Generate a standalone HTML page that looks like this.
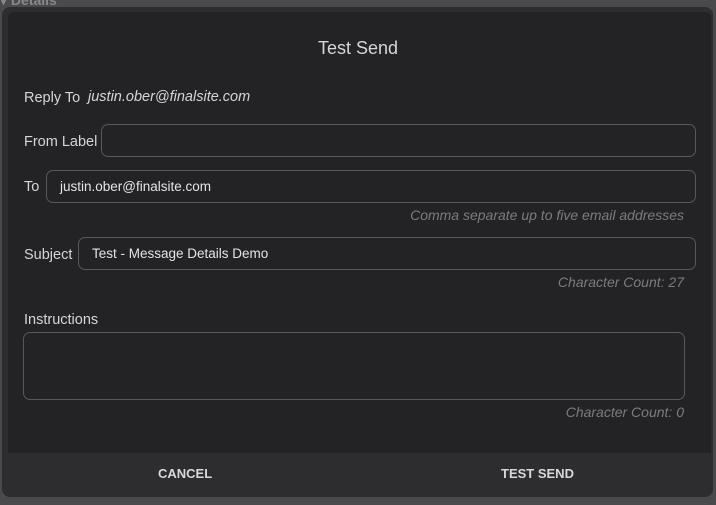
<!DOCTYPE html><html><head><style>
body{margin:0;width:716px;height:505px;background:#4a4a4d;position:relative;overflow:hidden;font-family:"Liberation Sans",sans-serif;}
.dlg{position:absolute;left:2px;top:7px;width:711px;height:490px;background:#2d2d30;border-radius:8px;}
.in{position:absolute;left:8px;top:12px;width:703px;height:441px;background:#232326;border-radius:6px 6px 0 0;}
.t{position:absolute;color:#d6d6d8;font-size:14.5px;}
.box{position:absolute;border:1px solid #58585c;border-radius:7px;box-sizing:border-box;color:#e4e4e6;font-size:13.5px;padding-left:13px;display:flex;align-items:center;}
.h{position:absolute;color:#7c7c80;font-size:14px;font-style:italic;text-align:right;right:32px;}
.btn{position:absolute;color:#d8d8da;font-size:13px;font-weight:bold;top:466px;}
</style></head><body>
<div style="position:absolute;left:0;top:-8px;color:#888;font-size:14px;font-weight:bold">▾ Details</div>
<div class="dlg"></div><div class="in"></div>
<div class="t" style="left:0;width:716px;text-align:center;top:38px;font-size:18px;">Test Send</div>
<div class="t" style="left:24px;top:90px">Reply To</div>
<div class="t" style="left:88px;top:89px;font-style:italic">justin.ober@finalsite.com</div>
<div class="t" style="left:24px;top:134px">From Label</div>
<div class="box" style="left:101px;top:124px;width:595px;height:33px"></div>
<div class="t" style="left:24px;top:179px">To</div>
<div class="box" style="left:46px;top:170px;width:650px;height:33px">justin.ober@finalsite.com</div>
<div class="h" style="top:207px">Comma separate up to five email addresses</div>
<div class="t" style="left:24px;top:247px">Subject</div>
<div class="box" style="left:78px;top:237px;width:618px;height:33px">Test - Message Details Demo</div>
<div class="h" style="top:274px">Character Count: 27</div>
<div class="t" style="left:24px;top:312px">Instructions</div>
<div class="box" style="left:23px;top:332px;width:662px;height:68px"></div>
<div class="h" style="top:404px">Character Count: 0</div>
<div class="btn" style="left:158px">CANCEL</div>
<div class="btn" style="left:501px">TEST SEND</div>
</body></html>
